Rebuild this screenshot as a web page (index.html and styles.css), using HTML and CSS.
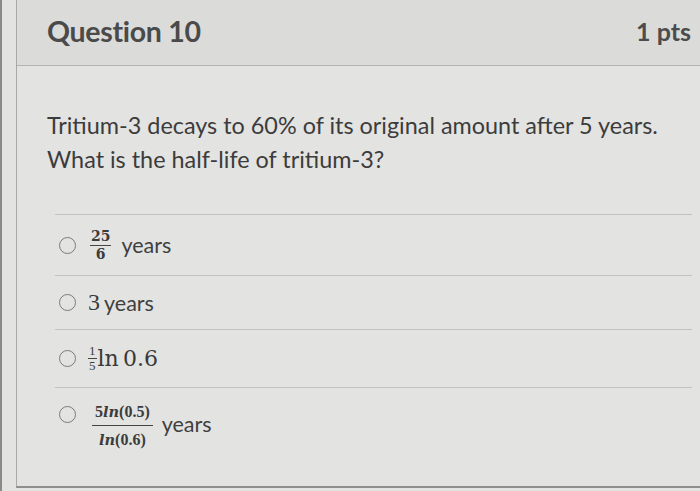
FILE: index.html
```html
<!DOCTYPE html>
<html>
<head>
<meta charset="utf-8">
<link rel="stylesheet" href="styles.css">
</head>
<body>
<div class="page">
  <div class="card">
    <div class="header">
      <span class="title">Question 10</span>
      <span class="pts">1 pts</span>
    </div>
    <div class="body">
      <p class="question">Tritium-3 decays to 60% of its original amount after 5 years.<br>What is the half-life of tritium-3?</p>
      <div class="answers">
        <div class="answer a1">
          <span class="radio"></span>
          <span class="frac small"><span class="num">25</span><span class="den">6</span></span>
          <span class="word">years</span>
        </div>
        <div class="answer a2">
          <span class="radio"></span>
          <span class="math">3</span>
          <span class="word w2">years</span>
        </div>
        <div class="answer a3">
          <span class="radio"></span>
          <span class="frac tiny"><span class="num">1</span><span class="den">5</span></span>
          <span class="math ln">ln&#8201;0.6</span>
        </div>
        <div class="answer a4">
          <span class="radio"></span>
          <span class="frac big"><span class="num">5<i>ln</i>(0.5)</span><span class="den"><i>ln</i>(0.6)</span></span>
          <span class="word">years</span>
        </div>
      </div>
    </div>
  </div>
</div>
</body>
</html>
```

FILE: styles.css
```css
html, body {
  margin: 0;
  padding: 0;
}
body {
  width: 700px;
  height: 491px;
  overflow: hidden;
  background: #e3e3e1;
  font-family: Lato, "Noto Sans", sans-serif;
  color: #3f3f3f;
}
.page {
  height: 491px;
  border-left: 2px solid #8a8a8a;
  box-sizing: border-box;
  padding-left: 14px;
}
.card {
  height: 488px;
  border-left: 1px solid #a9a9a7;
  border-bottom: 2px solid #8f8f8f;
  box-sizing: border-box;
}
.header {
  height: 66px;
  box-sizing: border-box;
  background: #dbdbd9;
  border-bottom: 1px solid #b4b4b2;
  display: flex;
  justify-content: space-between;
  align-items: center;
  padding: 0 9px 4px 30px;
}
.title {
  font-size: 28.5px;
  font-weight: 700;
  color: #4a4a4a;
  letter-spacing: -0.3px;
}
.pts {
  font-size: 25px;
  font-weight: 700;
  color: #4c4c4c;
}
.body {
  padding-top: 42px;
}
.question {
  margin: 0 0 0 30px;
  font-size: 23.4px;
  line-height: 34px;
  color: #3c3c3c;
}
.answers {
  margin-top: 38px;
  margin-left: 38px;
  margin-right: 8px;
}
.answer {
  border-top: 1px solid #c2c2c0;
  display: flex;
  align-items: center;
  padding-left: 4px;
  box-sizing: border-box;
}
.a1 { height: 61px; }
.a2 { height: 54px; }
.a3 { height: 58px; }
.a4 { height: 99px; align-items: flex-start; padding-top: 13px; }
.radio {
  width: 17px;
  height: 17px;
  border: 1.6px solid #7a7a7a;
  border-radius: 50%;
  box-sizing: border-box;
  flex: none;
  margin-right: 12px;
}
.a1 .radio { margin-right: 14px; }
.a4 .radio { margin-top: 5px; margin-right: 16px; }
.frac {
  display: inline-flex;
  flex-direction: column;
  align-items: center;
  font-family: "DejaVu Serif", "Liberation Serif", serif;
  color: #3c3c3c;
}
.frac .num {
  border-bottom: 1.3px solid #444;
  padding: 0 1px;
}
.small { font-size: 14px; font-weight: 700; line-height: 15px; margin-right: 10px; }
.small .num { padding-bottom: 1px; }
.small .den { padding-top: 1px; }
.tiny { font-size: 13px; line-height: 12px; margin-right: 1px; font-family: "Liberation Serif", serif; }
.tiny .num { padding-bottom: 1px; }
.tiny .den { padding-top: 1px; }
.big { font-size: 16px; font-weight: 700; line-height: 22px; margin-right: 9px; font-family: "Liberation Serif", "DejaVu Serif", serif; }
.big .num { padding: 0 3px 2px; }
.big .den { padding-top: 3px; }
.big i { font-family: "DejaVu Serif", serif; font-style: italic; font-weight: 600; font-size: 14.5px; }
.word {
  font-size: 21.5px;
  color: #3f3f3f;
}
.a4 .word { margin-top: 10px; }
.math {
  font-family: "DejaVu Serif", "Liberation Serif", serif;
  font-size: 21px;
  color: #3a3a3a;
}
.a2 .math { font-family: "Liberation Serif", serif; font-size: 24px; }
.w2 { margin-left: 4px; }
.ln { font-size: 22px; }
```
